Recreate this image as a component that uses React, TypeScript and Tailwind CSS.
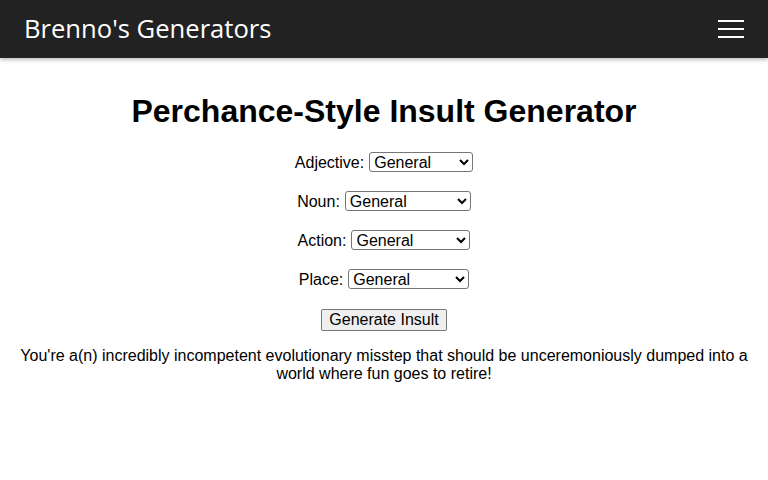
import React, { useState } from 'react';

const selectClass =
  'h-[20px] border border-[#767676] rounded-[3px] bg-white text-[16px] leading-[18px] text-black pl-0 pr-[1px] font-["Liberation_Sans",Arial,sans-serif]';

const fields = [
  { label: 'Adjective:', width: 'w-[104px]' },
  { label: 'Noun:', width: 'w-[126px]' },
  { label: 'Action:', width: 'w-[119px]' },
  { label: 'Place:', width: 'w-[121px]' },
];

export default function App() {
  const [values, setValues] = useState<string[]>(['General', 'General', 'General', 'General']);

  return (
    <div className="min-h-[480px] bg-white text-black font-['Liberation_Sans',Arial,sans-serif]">
      {/* Top navbar */}
      <header className="h-[58px] bg-[#222222] px-6 flex items-center justify-between shadow-[0_2px_4px_rgba(0,0,0,0.25)]">
        <span className="text-white text-[25.6px] font-['Open_Sans',sans-serif] leading-none">
          Brenno's Generators
        </span>
        <button className="w-[26px] h-[18px] flex flex-col justify-between cursor-pointer">
          <span className="block h-[2px] w-full bg-white" />
          <span className="block h-[2px] w-full bg-white" />
          <span className="block h-[2px] w-full bg-white" />
        </button>
      </header>

      <main className="px-5 text-center">
        <h1 className="mt-[35px] mb-[22px] text-[32px] leading-[37px] font-bold">
          Perchance-Style Insult Generator
        </h1>

        <div className="flex flex-col items-center gap-[19px]">
          {fields.map((f, i) => (
            <div key={f.label} className="flex items-center gap-[5px] h-[20px] text-[16px]">
              <label className="pt-[2px]">{f.label}</label>
              <select
                className={`${selectClass} ${f.width}`}
                value={values[i]}
                onChange={(e) => {
                  const next = [...values];
                  next[i] = e.target.value;
                  setValues(next);
                }}
              >
                <option>General</option>
              </select>
            </div>
          ))}
        </div>

        <div className="mt-[20px] flex justify-center">
          <button className="h-[22px] px-[7px] bg-[#efefef] border border-[#767676] rounded-[2px] text-[16px] leading-[18px]">
            Generate Insult
          </button>
        </div>

        <p className="mt-[16px] text-[16px] leading-[18px]">
          You're a(n) incredibly incompetent evolutionary misstep that should be unceremoniously dumped into a world where fun goes to retire!
        </p>
      </main>
    </div>
  );
}
